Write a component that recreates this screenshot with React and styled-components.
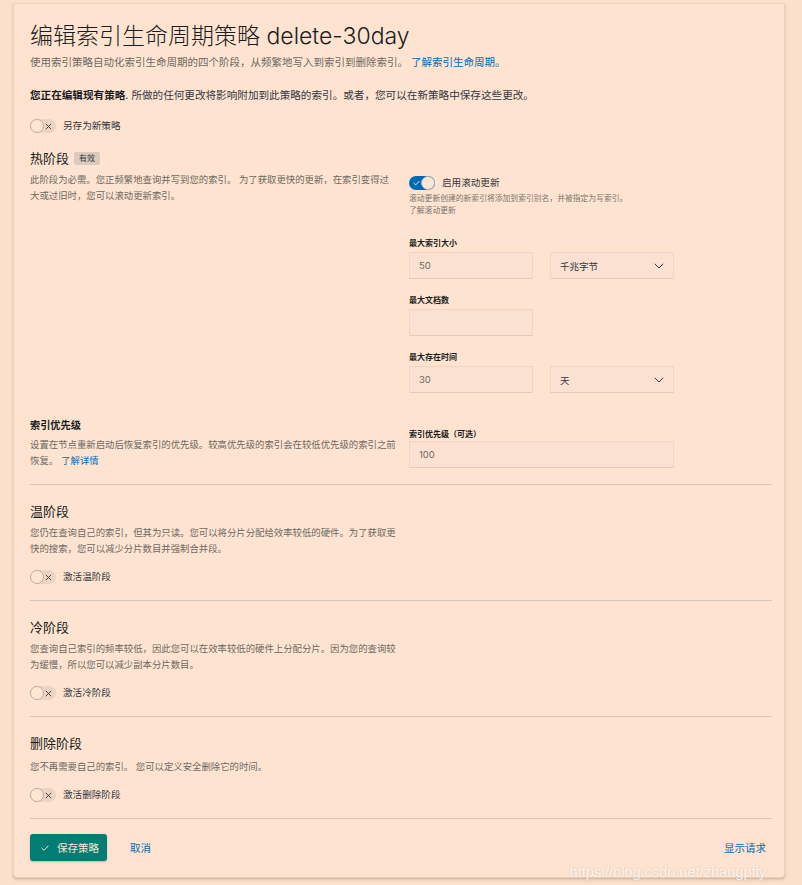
import React from 'react';
import styled, { createGlobalStyle } from 'styled-components';

const GlobalStyle = createGlobalStyle`
  html, body {
    margin: 0;
    padding: 0;
    background: #fbe0cb;
  }
  body {
    font-family: Inter, "Noto Sans CJK SC", sans-serif;
    color: #343741;
  }
`;

const Page = styled.div`
  position: relative;
  height: 885px;
  padding: 3px 17px 0 13px;
  box-sizing: border-box;
  overflow: hidden;
`;

const Panel = styled.div`
  background: #fee4d0;
  border: 1px solid #ead0be;
  border-radius: 0 0 4px 4px;
  box-shadow: 0 2px 3px rgba(120, 80, 50, 0.18), 0 1px 1px rgba(120, 80, 50, 0.12);
  padding: 17px 12px 16px 16px;
`;

const Title = styled.h1`
  margin: 0;
  font-size: 23px;
  line-height: 30px;
  font-weight: 300;
  color: #1a1c21;
`;

const Subtitle = styled.p`
  margin: 4px 0 0;
  font-size: 10.5px;
  line-height: 16px;
  color: #6d6863;
`;

const Link = styled.a`
  color: #006bb4;
  text-decoration: none;
  margin-left: ${p => p.$gap || 0}px;
`;

const Callout = styled.p`
  margin: 17px 0 0;
  font-size: 10.6px;
  line-height: 16px;
  color: #343741;
  & > b {
    font-weight: 700;
    color: #1a1c21;
  }
`;

const SwitchRow = styled.label`
  display: flex;
  align-items: center;
  gap: 7px;
  height: 16px;
  margin-top: ${p => p.$top || 0}px;
`;

const SwitchTrack = styled.span`
  position: relative;
  display: inline-flex;
  align-items: center;
  justify-content: ${p => (p.$on ? 'flex-start' : 'flex-end')};
  box-sizing: border-box;
  width: 26px;
  height: 14px;
  padding: 0 4px;
  border-radius: 7px;
  background: ${p => (p.$on ? '#006bb4' : '#ecd4c3')};
  flex-shrink: 0;
`;

const Thumb = styled.span`
  position: absolute;
  top: 0;
  left: ${p => (p.$on ? '12px' : '0')};
  width: 14px;
  height: 14px;
  box-sizing: border-box;
  border-radius: 50%;
  background: #fee6d3;
  border: 1px solid ${p => (p.$on ? '#9fb6c8' : '#c3ad9e')};
`;

const SwitchLabel = styled.span`
  font-size: 9.6px;
  line-height: 16px;
  color: #343741;
`;

const Switch = ({ on, label, top }) => (
  <SwitchRow $top={top}>
    <SwitchTrack $on={on}>
      {on ? (
        <svg width="7" height="6" viewBox="0 0 8 6">
          <path d="M0.7 3.1 L3 5.2 L7.3 0.8" fill="none" stroke="#fee5d1" strokeWidth="1.1" />
        </svg>
      ) : (
        <svg width="7" height="7" viewBox="0 0 7 7">
          <path d="M0.8 0.8 L6.2 6.2 M6.2 0.8 L0.8 6.2" fill="none" stroke="#3e3834" strokeWidth="0.9" />
        </svg>
      )}
      <Thumb $on={on} />
    </SwitchTrack>
    <SwitchLabel>{label}</SwitchLabel>
  </SwitchRow>
);

const Phase = styled.section`
  padding: ${p => (p.$first ? '0' : '16px')} 0 15px;
  border-bottom: 1px solid #d6c6ba;
`;

const PhaseTitle = styled.h2`
  display: flex;
  align-items: center;
  gap: 5px;
  margin: ${p => (p.$first ? '15px' : '0')} 0 0;
  font-size: 13px;
  line-height: ${p => (p.$first ? '18px' : '20px')};
  font-weight: 400;
  color: #1a1c21;
`;

const Badge = styled.span`
  display: inline-block;
  height: 13px;
  padding: 0 5px;
  border-radius: 2px;
  background: #dccabd;
  font-size: 8px;
  line-height: 13px;
  color: #343741;
`;

const Desc = styled.p`
  margin: ${p => p.$top ?? 4}px 0 0;
  font-size: 9.4px;
  line-height: 16px;
  white-space: nowrap;
  color: #6d6863;
`;

const TwoCol = styled.div`
  display: grid;
  grid-template-columns: 362px 265px;
  column-gap: 17px;
  align-items: start;
  margin-top: ${p => p.$top}px;
`;

const Column = styled.div`
  padding-top: ${p => p.$pad || 0}px;
`;

const Help = styled.p`
  margin: 1px 0 0;
  font-size: 7.8px;
  line-height: 12px;
  white-space: nowrap;
  color: #7a746f;
`;

const FieldLabel = styled.div`
  margin-top: ${p => p.$top ?? 14}px;
  font-size: 8px;
  line-height: 14px;
  font-weight: 700;
  color: #1a1c21;
`;

const FieldRow = styled.div`
  display: flex;
  gap: 17px;
  margin-top: ${p => p.$top ?? 2}px;
`;

const Input = styled.div`
  box-sizing: border-box;
  width: ${p => p.$w || 124}px;
  height: 27px;
  padding: 0 9px;
  display: flex;
  align-items: center;
  justify-content: space-between;
  background: #fbe1d1;
  border: 1px solid #f0d5c3;
  border-bottom-color: #e6cab8;
  font-size: 9.5px;
  color: ${p => (p.$dark ? '#343741' : '#6f6964')};
`;

const SectionHeading = styled.h3`
  margin: 0;
  font-size: 10.2px;
  line-height: 16px;
  font-weight: 700;
  color: #1a1c21;
`;

const Footer = styled.div`
  display: flex;
  align-items: center;
  margin-top: 15px;
  padding-right: 6px;
`;

const SaveButton = styled.button`
  display: flex;
  align-items: center;
  gap: 8px;
  height: 27px;
  padding: 0 8px 0 11px;
  border: none;
  border-radius: 3px;
  background: #027d73;
  box-shadow: 0 1px 2px rgba(60, 40, 20, 0.25);
  font-family: inherit;
  font-size: 10.5px;
  color: #fde3cf;
`;

const FooterLink = styled.a`
  font-size: 10.5px;
  color: #006bb4;
  margin-left: ${p => (p.$auto ? 'auto' : '23px')};
`;

const Watermark = styled.div`
  position: absolute;
  right: 36px;
  bottom: 5px;
  font-family: "Liberation Sans Narrow", "Liberation Sans", sans-serif;
  font-size: 15px;
  color: rgba(255, 255, 255, 0.8);
  text-shadow: 0 0 2px rgba(190, 160, 140, 0.6);
  letter-spacing: -0.2px;
`;

const Chevron = () => (
  <svg width="10" height="6" viewBox="0 0 10 6">
    <path d="M0.8 0.8 L5 5 L9.2 0.8" fill="none" stroke="#343741" strokeWidth="1" />
  </svg>
);

const Check = () => (
  <svg width="8" height="6" viewBox="0 0 8 6">
    <path d="M0.6 3 L3 5.3 L7.4 0.7" fill="none" stroke="#fde3cf" strokeWidth="1" />
  </svg>
);

const phases = [
  {
    title: '温阶段',
    lines: ['您仍在查询自己的索引，但其为只读。您可以将分片分配给效率较低的硬件。为了获取更', '快的搜索，您可以减少分片数目并强制合并段。'],
    toggle: '激活温阶段',
  },
  {
    title: '冷阶段',
    lines: ['您查询自己索引的频率较低，因此您可以在效率较低的硬件上分配分片。因为您的查询较', '为缓慢，所以您可以减少副本分片数目。'],
    toggle: '激活冷阶段',
  },
  {
    title: '删除阶段',
    lines: ['您不再需要自己的索引。 您可以定义安全删除它的时间。'],
    toggle: '激活删除阶段',
    descTop: 6,
  },
];

export default function App() {
  return (
    <Page>
      <GlobalStyle />
      <Panel>
        <Title>编辑索引生命周期策略 delete-30day</Title>
        <Subtitle>
          使用索引策略自动化索引生命周期的四个阶段，从频繁地写入到索引到删除索引。
          <Link $gap={3}>了解索引生命周期。</Link>
        </Subtitle>
        <Callout>
          <b>您正在编辑现有策略</b>. 所做的任何更改将影响附加到此策略的索引。或者，您可以在新策略中保存这些更改。
        </Callout>
        <Switch on={false} label="另存为新策略" top={14} />

        <Phase $first>
          <PhaseTitle $first>
            热阶段 <Badge>有效</Badge>
          </PhaseTitle>
          <TwoCol $top={5}>
            <Column>
              <Desc $top={0}>
                此阶段为必需。您正频繁地查询并写到您的索引。 为了获取更快的更新，在索引变得过<br />
                大或过旧时，您可以滚动更新索引。
              </Desc>
            </Column>
            <Column $pad={3}>
              <Switch on label="启用滚动更新" />
              <Help>
                滚动更新创建的新索引将添加到索引别名，并被指定为写索引。<br />
                了解滚动更新
              </Help>
              <FieldLabel $top={20}>最大索引大小</FieldLabel>
              <FieldRow>
                <Input>50</Input>
                <Input $dark>
                  千兆字节 <Chevron />
                </Input>
              </FieldRow>
              <FieldLabel>最大文档数</FieldLabel>
              <FieldRow>
                <Input />
              </FieldRow>
              <FieldLabel>最大存在时间</FieldLabel>
              <FieldRow>
                <Input>30</Input>
                <Input $dark>
                  天 <Chevron />
                </Input>
              </FieldRow>
            </Column>
          </TwoCol>
          <TwoCol $top={24}>
            <Column>
              <SectionHeading>索引优先级</SectionHeading>
              <Desc>
                设置在节点重新启动后恢复索引的优先级。较高优先级的索引会在较低优先级的索引之前<br />
                恢复。<Link $gap={3}>了解详情</Link>
              </Desc>
            </Column>
            <Column $pad={10}>
              <FieldLabel $top={0}>索引优先级（可选）</FieldLabel>
              <FieldRow $top={0}>
                <Input $w={265}>100</Input>
              </FieldRow>
            </Column>
          </TwoCol>
        </Phase>

        {phases.map((phase, i) => (
          <Phase key={i}>
            <PhaseTitle>{phase.title}</PhaseTitle>
            <Desc $top={phase.descTop}>
              {phase.lines.map((line, idx) => (
                <React.Fragment key={idx}>
                  {idx > 0 && <br />}
                  {line}
                </React.Fragment>
              ))}
            </Desc>
            <Switch on={false} label={phase.toggle} top={12} />
          </Phase>
        ))}

        <Footer>
          <SaveButton>
            <Check /> 保存策略
          </SaveButton>
          <FooterLink>取消</FooterLink>
          <FooterLink $auto>显示请求</FooterLink>
        </Footer>
      </Panel>
      <Watermark>https://blog.csdn.net/zhangpfly</Watermark>
    </Page>
  );
}
